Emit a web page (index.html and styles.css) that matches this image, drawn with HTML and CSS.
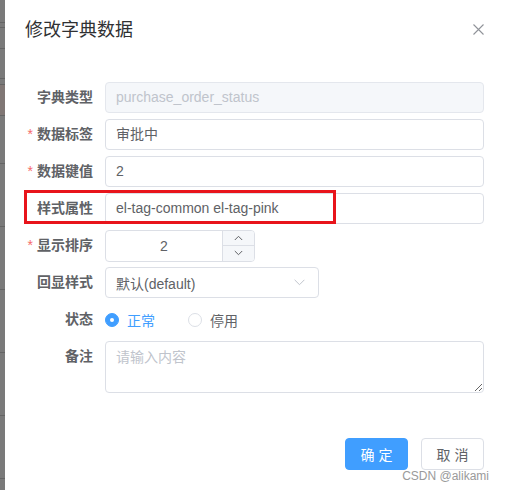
FILE: index.html
```html
<!DOCTYPE html>
<html lang="zh-CN">
<head>
<meta charset="utf-8">
<title>修改字典数据</title>
<link rel="stylesheet" href="styles.css">
</head>
<body>
<div class="page">
  <div class="backdrop">
    <div class="cell c1"></div>
    <div class="cell c2"></div>
    <div class="cell c3"></div>
    <div class="cell c4"></div>
    <div class="cell c5"></div>
    <div class="cell c6 tint"></div>
    <div class="cell c7"></div>
    <div class="cell c8"></div>
    <div class="cell c8"></div>
    <div class="cell c8"></div>
    <div class="cell c8"></div>
    <div class="cell c8"></div>
    <div class="cell last"></div>
  </div>
  <div class="dialog">
    <div class="dialog-header">
      <span class="dialog-title">修改字典数据</span>
      <button class="close" aria-label="关闭">
        <svg width="11" height="11" viewBox="0 0 11 11"><path d="M0.5 0.5 L10.5 10.5 M10.5 0.5 L0.5 10.5" stroke="#909399" stroke-width="1.1" fill="none"/></svg>
      </button>
    </div>
    <div class="dialog-body">
      <form class="form">
        <label class="label">字典类型</label>
        <div class="control"><div class="input disabled">purchase_order_status</div></div>

        <label class="label required">数据标签</label>
        <div class="control"><div class="input">审批中</div></div>

        <label class="label required">数据键值</label>
        <div class="control"><div class="input">2</div></div>

        <label class="label">样式属性</label>
        <div class="control"><div class="input">el-tag-common el-tag-pink</div></div>

        <label class="label required">显示排序</label>
        <div class="control">
          <div class="number">
            <div class="number-value">2</div>
            <div class="number-ctrl">
              <span class="step up"><svg width="9" height="6" viewBox="0 0 9 6"><path d="M0.8 5 L4.5 1.3 L8.2 5" stroke="#606266" stroke-width="1" fill="none"/></svg></span>
              <span class="step down"><svg width="9" height="6" viewBox="0 0 9 6"><path d="M0.8 1 L4.5 4.7 L8.2 1" stroke="#606266" stroke-width="1" fill="none"/></svg></span>
            </div>
          </div>
        </div>

        <label class="label">回显样式</label>
        <div class="control">
          <div class="select">
            <span>默认(default)</span>
            <svg width="11" height="7" viewBox="0 0 11 7"><path d="M0.6 0.8 L5.5 5.7 L10.4 0.8" stroke="#c0c4cc" stroke-width="1" fill="none"/></svg>
          </div>
        </div>

        <label class="label">状态</label>
        <div class="control radios">
          <span class="radio checked"><span class="dot"></span><span class="radio-text">正常</span></span>
          <span class="radio"><span class="dot"></span><span class="radio-text">停用</span></span>
        </div>

        <label class="label">备注</label>
        <div class="control top"><textarea class="textarea" placeholder="请输入内容"></textarea></div>
      </form>
    </div>
    <div class="dialog-footer">
      <button class="btn primary">确 定</button>
      <button class="btn">取 消</button>
    </div>
    <div class="highlight"></div>
    <div class="watermark">CSDN @alikami</div>
  </div>
</div>
</body>
</html>
```

FILE: styles.css
```css
html, body {
  margin: 0;
  padding: 0;
  background: #ffffff;
}
body {
  font-family: "Liberation Sans", "Noto Sans CJK SC", sans-serif;
  font-size: 14px;
  color: #606266;
}
.page {
  width: 505px;
  height: 490px;
  display: flex;
  overflow: hidden;
}
.backdrop {
  width: 5px;
  flex: none;
  background: #7a7a7a;
  display: flex;
  flex-direction: column;
}
.cell {
  border-bottom: 1px solid #656565;
  box-sizing: border-box;
}
.c1 { height: 23px; }
.c2 { height: 5px; }
.c3 { height: 21px; }
.c4 { height: 30px; }
.c5 { height: 6px; }
.c6 { height: 31px; }
.tint { background: #807775; }
.c7 { height: 48px; }
.c8 { height: 63px; }
.last { flex: 1; border-bottom: none; }

.dialog {
  flex: 1;
  position: relative;
  background: #ffffff;
  display: flex;
  flex-direction: column;
}
.dialog-header {
  padding: 18px 20px 0 20px;
  height: 24px;
  position: relative;
}
.dialog-title {
  font-size: 18px;
  line-height: 24px;
  color: #303133;
}
.close {
  position: absolute;
  top: 24px;
  right: 21px;
  width: 11px;
  height: 11px;
  padding: 0;
  border: none;
  background: none;
  display: block;
}
.close svg { display: block; }

.dialog-body {
  padding: 40px 21px 0 20px;
}
.form {
  display: grid;
  grid-template-columns: 80px 1fr;
  grid-template-rows: repeat(7, 31px) auto;
  row-gap: 6px;
  margin: 0;
}
.label {
  font-weight: 700;
  color: #606266;
  text-align: right;
  padding-right: 12px;
  line-height: 31px;
  font-size: 14px;
}
.required::before {
  content: "*";
  color: #f56c6c;
  margin-right: 4px;
  font-weight: 400;
}
.control {
  display: flex;
  align-items: center;
  min-width: 0;
}
.control.top {
  align-items: flex-start;
}
.input {
  box-sizing: border-box;
  width: 100%;
  height: 31px;
  line-height: 29px;
  border: 1px solid #dcdfe6;
  border-radius: 4px;
  padding: 0 10px;
  color: #606266;
  background: #fff;
  white-space: nowrap;
}
.input.disabled {
  background: #f5f7fa;
  border-color: #e4e7ed;
  color: #c0c4cc;
}
.number {
  box-sizing: border-box;
  width: 150px;
  height: 32px;
  border: 1px solid #dcdfe6;
  border-radius: 4px;
  display: flex;
  overflow: hidden;
}
.number-value {
  flex: 1;
  text-align: center;
  line-height: 30px;
  color: #606266;
}
.number-ctrl {
  width: 31px;
  border-left: 1px solid #dcdfe6;
  background: #f5f7fa;
  display: flex;
  flex-direction: column;
}
.step {
  flex: 1;
  display: flex;
  align-items: center;
  justify-content: center;
}
.step.up { border-bottom: 1px solid #dcdfe6; }
.step svg { display: block; }

.select {
  box-sizing: border-box;
  width: 214px;
  height: 31px;
  border: 1px solid #dcdfe6;
  border-radius: 4px;
  padding: 0 13px 0 10px;
  display: flex;
  align-items: center;
  justify-content: space-between;
  color: #606266;
}
.select svg { display: block; }

.radios {
  gap: 33px;
}
.radio {
  display: inline-flex;
  align-items: center;
  color: #606266;
}
.dot {
  box-sizing: border-box;
  width: 14px;
  height: 14px;
  border-radius: 50%;
  border: 1px solid #dcdfe6;
  background: #fff;
  margin-right: 8px;
  position: relative;
}
.radio.checked .dot {
  border-color: #409eff;
  background: #409eff;
}
.radio.checked .dot::after {
  content: "";
  position: absolute;
  left: 50%;
  top: 50%;
  width: 4px;
  height: 4px;
  margin: -2px 0 0 -2px;
  border-radius: 50%;
  background: #fff;
}
.radio.checked .radio-text { color: #409eff; }

.textarea {
  box-sizing: border-box;
  width: 100%;
  height: 52px;
  border: 1px solid #dcdfe6;
  border-radius: 4px;
  padding: 5px 10px;
  font-family: "Liberation Sans", "Noto Sans CJK SC", sans-serif;
  font-size: 14px;
  line-height: 21px;
  color: #606266;
  resize: vertical;
  margin: 0;
  display: block;
}
.textarea::placeholder { color: #c0c4cc; }

.dialog-footer {
  padding: 45px 21px 0 20px;
  display: flex;
  justify-content: flex-end;
  gap: 13px;
}
.btn {
  box-sizing: border-box;
  width: 63px;
  height: 32px;
  border: 1px solid #dcdfe6;
  border-radius: 4px;
  background: #fff;
  color: #606266;
  font-family: "Liberation Sans", "Noto Sans CJK SC", sans-serif;
  font-size: 14px;
  padding: 0;
  white-space: pre;
}
.btn.primary {
  background: #409eff;
  border-color: #409eff;
  color: #fff;
}

.highlight {
  position: absolute;
  left: 19px;
  top: 190px;
  width: 312px;
  height: 34px;
  box-sizing: border-box;
  border: 3px solid #e8141b;
  pointer-events: none;
}
.watermark {
  position: absolute;
  right: 16px;
  top: 469px;
  font-size: 12px;
  line-height: 14px;
  color: #9a9a9a;
  font-family: "Liberation Sans", sans-serif;
}
```
